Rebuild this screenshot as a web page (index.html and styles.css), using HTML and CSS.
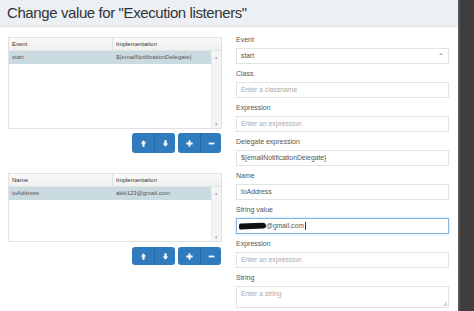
FILE: index.html
```html
<!DOCTYPE html>
<html lang="en">
<head>
  <meta charset="UTF-8">
  <title>Change value for "Execution listeners"</title>
  <link rel="stylesheet" href="styles.css">
</head>
<body>
  <div class="modal">
    <div class="modal-header">Change value for "Execution listeners"</div>

    <div class="modal-body">
      <div class="left-col">
        <!-- listeners table -->
        <div class="grid-box grid-tall">
          <div class="grid-head">
            <div class="cell col-a">Event</div>
            <div class="cell col-b">Implementation</div>
            <div class="cell col-s"></div>
          </div>
          <div class="grid-rows">
            <div class="grid-data">
              <div class="grid-row selected">
                <div class="cell col-a">start</div>
                <div class="cell col-b">${emailNotificationDelegate}</div>
              </div>
            </div>
            <div class="scrollbar"><span>&#9652;</span><span>&#9662;</span></div>
          </div>
        </div>
        <div class="btn-bar">
          <div class="btn-group">
            <button class="btn"><svg viewBox="0 0 10 10"><path d="M5 1.5 L8 5 H6.2 V8.5 H3.8 V5 H2 Z"/></svg></button>
            <button class="btn"><svg viewBox="0 0 10 10"><path d="M5 8.5 L8 5 H6.2 V1.5 H3.8 V5 H2 Z"/></svg></button>
          </div>
          <div class="btn-group">
            <button class="btn"><svg viewBox="0 0 10 10"><path d="M4 1.5 H6 V4 H8.5 V6 H6 V8.5 H4 V6 H1.5 V4 H4 Z"/></svg></button>
            <button class="btn"><svg viewBox="0 0 10 10"><path d="M1.8 4 H8.2 V6 H1.8 Z"/></svg></button>
          </div>
        </div>

        <!-- fields table -->
        <div class="grid-box grid-short">
          <div class="grid-head">
            <div class="cell col-a">Name</div>
            <div class="cell col-b">Implementation</div>
            <div class="cell col-s"></div>
          </div>
          <div class="grid-rows">
            <div class="grid-data">
              <div class="grid-row selected">
                <div class="cell col-a">toAddress</div>
                <div class="cell col-b">akki123@gmail.com</div>
              </div>
            </div>
            <div class="scrollbar"><span>&#9652;</span><span>&#9662;</span></div>
          </div>
        </div>
        <div class="btn-bar">
          <div class="btn-group">
            <button class="btn"><svg viewBox="0 0 10 10"><path d="M5 1.5 L8 5 H6.2 V8.5 H3.8 V5 H2 Z"/></svg></button>
            <button class="btn"><svg viewBox="0 0 10 10"><path d="M5 8.5 L8 5 H6.2 V1.5 H3.8 V5 H2 Z"/></svg></button>
          </div>
          <div class="btn-group">
            <button class="btn"><svg viewBox="0 0 10 10"><path d="M4 1.5 H6 V4 H8.5 V6 H6 V8.5 H4 V6 H1.5 V4 H4 Z"/></svg></button>
            <button class="btn"><svg viewBox="0 0 10 10"><path d="M1.8 4 H8.2 V6 H1.8 Z"/></svg></button>
          </div>
        </div>
      </div>

      <div class="right-col">
        <div class="field">
          <label>Event</label>
          <div class="control select">start<span class="caret">&#8964;</span></div>
        </div>
        <div class="field">
          <label>Class</label>
          <div class="control placeholder">Enter a classname</div>
        </div>
        <div class="field">
          <label>Expression</label>
          <div class="control placeholder">Enter an expression</div>
        </div>
        <div class="field">
          <label>Delegate expression</label>
          <div class="control">${emailNotificationDelegate}</div>
        </div>
        <div class="field">
          <label>Name</label>
          <div class="control">toAddress</div>
        </div>
        <div class="field">
          <label>String value</label>
          <div class="control focused"><span class="redacted"></span>@gmail.com<span class="cursor"></span></div>
        </div>
        <div class="field">
          <label>Expression</label>
          <div class="control placeholder">Enter an expression</div>
        </div>
        <div class="field">
          <label>String</label>
          <div class="control textarea placeholder">Enter a string<span class="grip"></span></div>
        </div>
      </div>
    </div>
  </div>
  <div class="backdrop"></div>
</body>
</html>
```

FILE: styles.css
```css
body {
  margin: 0;
  display: flex;
  height: 311px;
  overflow: hidden;
  background: #fff;
  font-family: 'Liberation Sans', Arial, sans-serif;
  color: #333;
}

.modal {
  width: 458px;
  background: #fff;
}

.backdrop {
  flex: 1;
  background: #3d3d3d;
  border-left: 2px solid #555;
}

.modal-header {
  height: 26px;
  line-height: 25px;
  padding-left: 7px;
  background: #eceff3;
  border-bottom: 1px solid #dfe2e6;
  font-size: 15px;
  letter-spacing: -0.4px;
  color: #333;
}

.modal-body {
  display: flex;
  gap: 14px;
  padding: 7px 0 0 8px;
}

.left-col {
  width: 214px;
  padding-top: 3px;
}

.grid-box {
  border: 1px solid #e2e2e2;
  display: flex;
  flex-direction: column;
  font-size: 6px;
}

.grid-tall {
  height: 90px;
}

.grid-short {
  height: 67px;
  margin-top: 20px;
}

.grid-head {
  display: flex;
  height: 12px;
  background: linear-gradient(#fafafa, #f0f0f0);
  border-bottom: 1px solid #e4e4e4;
  color: #333;
}

.cell {
  line-height: 12px;
  padding-left: 3px;
  white-space: nowrap;
  overflow: hidden;
}

.col-a {
  width: 100px;
  border-right: 1px solid #e0e0e0;
}

.col-b {
  flex: 1;
}

.col-s {
  width: 9px;
  flex: none;
  padding: 0;
}

.grid-rows {
  flex: 1;
  display: flex;
}

.grid-data {
  flex: 1;
}

.grid-row {
  display: flex;
  height: 13px;
}

.grid-row .cell {
  line-height: 13px;
  color: #555;
}

.grid-row .col-a {
  border-right: none;
  width: 101px;
}

.selected {
  background: #c9dbe0;
}

.scrollbar {
  width: 9px;
  background: #f4f4f4;
  border-left: 1px solid #ececec;
  display: flex;
  flex-direction: column;
  justify-content: space-between;
  align-items: center;
  font-size: 5px;
  color: #aaa;
  padding: 3px 0 1px;
}

.btn-bar {
  display: flex;
  justify-content: flex-end;
  gap: 3px;
  margin-top: 4px;
  padding-right: 1px;
}

.btn-group {
  display: flex;
}

.btn {
  width: 22px;
  height: 20px;
  padding: 0;
  border: none;
  background: #2f7bbd;
  display: flex;
  align-items: center;
  justify-content: center;
}

.btn + .btn {
  border-left: 1px solid #256aa5;
  width: 21px;
}

.btn:first-child {
  border-radius: 3px 0 0 3px;
}

.btn:last-child {
  border-radius: 0 3px 3px 0;
}

.btn svg {
  width: 9px;
  height: 9px;
  fill: #fff;
}

.grid-short + .btn-bar {
  margin-top: 5px;
}

.grid-short + .btn-bar .btn {
  height: 18px;
}

.right-col {
  width: 213px;
  display: flex;
  flex-direction: column;
}

.field {
  margin-bottom: 4px;
}

.field label {
  display: block;
  font-size: 7px;
  font-weight: normal;
  line-height: 12px;
  margin-bottom: 2px;
  color: #555;
}

.control {
  height: 14px;
  line-height: 14px;
  border: 1px solid #e3e3e3;
  padding-left: 4px;
  font-size: 6.8px;
  color: #555;
  position: relative;
  display: flex;
  align-items: center;
}

.placeholder {
  color: #a8a8a8;
}

.select .caret {
  position: absolute;
  right: 4px;
  top: -3px;
  font-size: 7px;
  color: #666;
}

.focused {
  border-color: #8ab6dd;
  box-shadow: 0 0 2px rgba(102, 175, 233, 0.6);
}

.redacted {
  display: inline-block;
  width: 27px;
  height: 6px;
  background: #111;
  border-radius: 3px 5px 4px 2px;
  transform: rotate(-2deg);
  margin-left: -2px;
}

.cursor {
  display: inline-block;
  width: 1px;
  height: 8px;
  background: #333;
  margin-left: 1px;
}

.textarea {
  height: 20px;
  align-items: flex-start;
}

.grip {
  position: absolute;
  right: 1px;
  bottom: 1px;
  width: 4px;
  height: 4px;
  background: linear-gradient(135deg, transparent 50%, #bbb 50%, #bbb 60%, transparent 60%, transparent 75%, #bbb 75%);
}
```
